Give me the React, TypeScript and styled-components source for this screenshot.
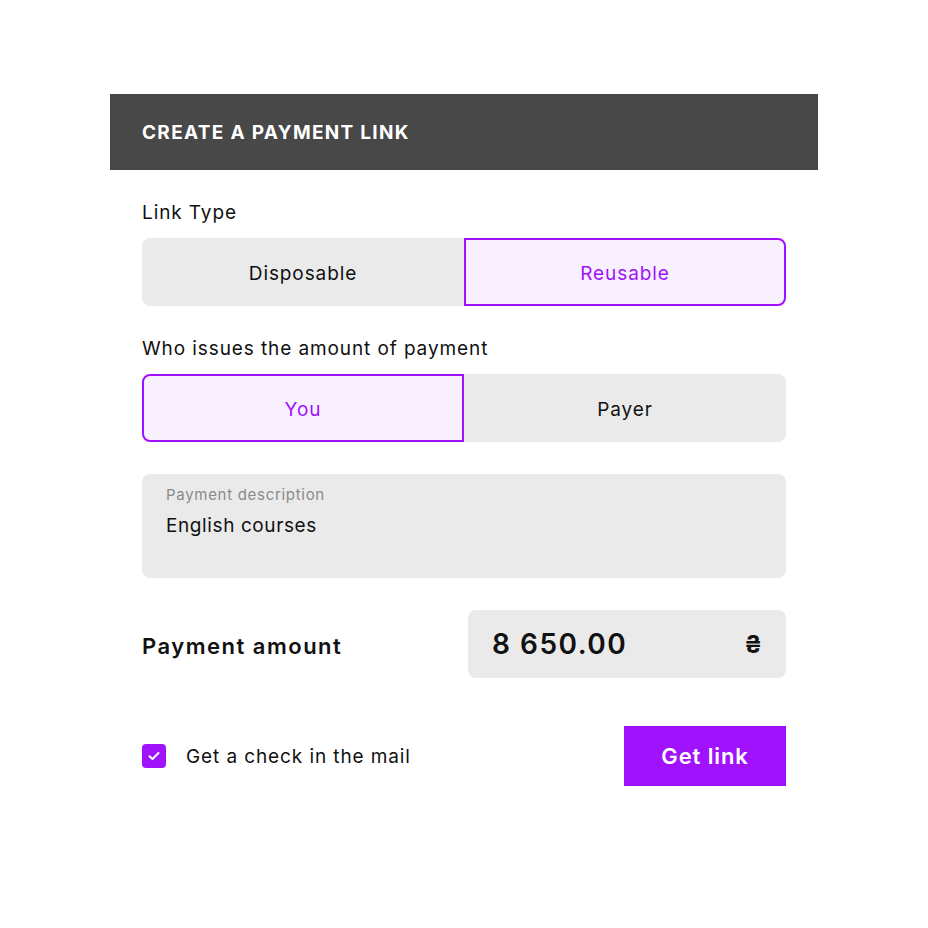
import React from "react";
import styled, { createGlobalStyle, css } from "styled-components";

const Global = createGlobalStyle`
  html, body { margin: 0; padding: 0; background: #ffffff; }
  body { font-family: "Inter", "Liberation Sans", sans-serif; color: #111111; }
  * { box-sizing: border-box; }
`;

const PURPLE = "#a012fb";

const Page = styled.div`
  width: 928px;
  height: 928px;
  padding-top: 94px;
  padding-left: 110px;
`;

const Card = styled.div`
  width: 708px;
  display: flex;
  flex-direction: column;
`;

const Header = styled.div`
  height: 76px;
  background: #484848;
  display: flex;
  align-items: center;
  padding-left: 32px;
`;

const Title = styled.h1`
  margin: 0;
  color: #ffffff;
  font-size: 19px;
  font-weight: 700;
  letter-spacing: 1.3px;
`;

const Body = styled.div`
  padding: 32px 32px 0 32px;
  display: flex;
  flex-direction: column;
`;

const Label = styled.div`
  font-size: 19px;
  letter-spacing: 0.9px;
  line-height: 22px;
  color: #111111;
  margin-bottom: 14px;
`;

const Segmented = styled.div<{ $mb?: number }>`
  display: grid;
  grid-template-columns: 1fr 1fr;
  height: 68px;
  margin-bottom: ${(p) => p.$mb ?? 0}px;
`;

const Option = styled.div<{ $active?: boolean; $side: "left" | "right" }>`
  display: flex;
  align-items: center;
  justify-content: center;
  font-size: 19px;
  letter-spacing: 0.9px;
  background: #eaeaea;
  color: #111111;
  padding-top: 2px;
  ${(p) =>
    p.$side === "left"
      ? css`border-radius: 8px 0 0 8px;`
      : css`border-radius: 0 8px 8px 0;`}
  ${(p) =>
    p.$active &&
    css`
      background: #f8f0fd;
      border: 2px solid ${PURPLE};
      color: ${PURPLE};
    `}
`;

const Description = styled.div`
  margin-top: 32px;
  height: 104px;
  background: #eaeaea;
  border-radius: 8px;
  padding: 12px 24px;
  display: flex;
  flex-direction: column;
`;

const FieldHint = styled.div`
  font-size: 15px;
  letter-spacing: 0.7px;
  color: #8a8a8a;
  line-height: 17px;
`;

const FieldValue = styled.div`
  margin-top: 11px;
  font-size: 19px;
  letter-spacing: 0.6px;
  color: #111111;
`;

const AmountRow = styled.div`
  margin-top: 32px;
  display: flex;
  align-items: center;
  justify-content: space-between;
`;

const AmountLabel = styled.div`
  font-size: 22px;
  font-weight: 600;
  letter-spacing: 1.5px;
  color: #111111;
  padding-top: 3px;
`;

const AmountBox = styled.div`
  width: 318px;
  height: 68px;
  background: #eaeaea;
  border-radius: 8px;
  display: flex;
  align-items: center;
  justify-content: space-between;
  padding: 0 24px;
`;

const AmountValue = styled.div`
  font-size: 28px;
  font-weight: 600;
  letter-spacing: 1.5px;
  color: #111111;
`;

const Currency = styled.div`
  font-size: 24px;
  font-weight: 700;
  color: #111111;
`;

const BottomRow = styled.div`
  margin-top: 48px;
  display: flex;
  align-items: center;
  justify-content: space-between;
`;

const CheckLabel = styled.label`
  display: flex;
  align-items: center;
  gap: 20px;
  font-size: 19px;
  letter-spacing: 0.9px;
  color: #111111;
`;

const CheckBox = styled.span`
  width: 24px;
  height: 24px;
  border-radius: 4px;
  background: ${PURPLE};
  display: flex;
  align-items: center;
  justify-content: center;
`;

const Button = styled.button`
  width: 162px;
  height: 60px;
  border: none;
  background: ${PURPLE};
  color: #ffffff;
  font-family: inherit;
  font-size: 22px;
  font-weight: 600;
  letter-spacing: 0.9px;
  cursor: pointer;
`;

export default function App() {
  return (
    <>
      <Global />
      <Page>
        <Card>
          <Header>
            <Title>CREATE A PAYMENT LINK</Title>
          </Header>
          <Body>
            <Label>Link Type</Label>
            <Segmented $mb={32}>
              <Option $side="left">Disposable</Option>
              <Option $side="right" $active>
                Reusable
              </Option>
            </Segmented>
            <Label>Who issues the amount of payment</Label>
            <Segmented>
              <Option $side="left" $active>
                You
              </Option>
              <Option $side="right">Payer</Option>
            </Segmented>
            <Description>
              <FieldHint>Payment description</FieldHint>
              <FieldValue>English courses</FieldValue>
            </Description>
            <AmountRow>
              <AmountLabel>Payment amount</AmountLabel>
              <AmountBox>
                <AmountValue>8 650.00</AmountValue>
                <Currency>₴</Currency>
              </AmountBox>
            </AmountRow>
            <BottomRow>
              <CheckLabel>
                <CheckBox>
                  <svg width="16" height="16" viewBox="0 0 16 16" fill="none">
                    <path
                      d="M3.5 8.2l3 2.8L12.5 5"
                      stroke="#fff"
                      strokeWidth="2"
                      strokeLinecap="round"
                      strokeLinejoin="round"
                    />
                  </svg>
                </CheckBox>
                Get a check in the mail
              </CheckLabel>
              <Button>Get link</Button>
            </BottomRow>
          </Body>
        </Card>
      </Page>
    </>
  );
}
